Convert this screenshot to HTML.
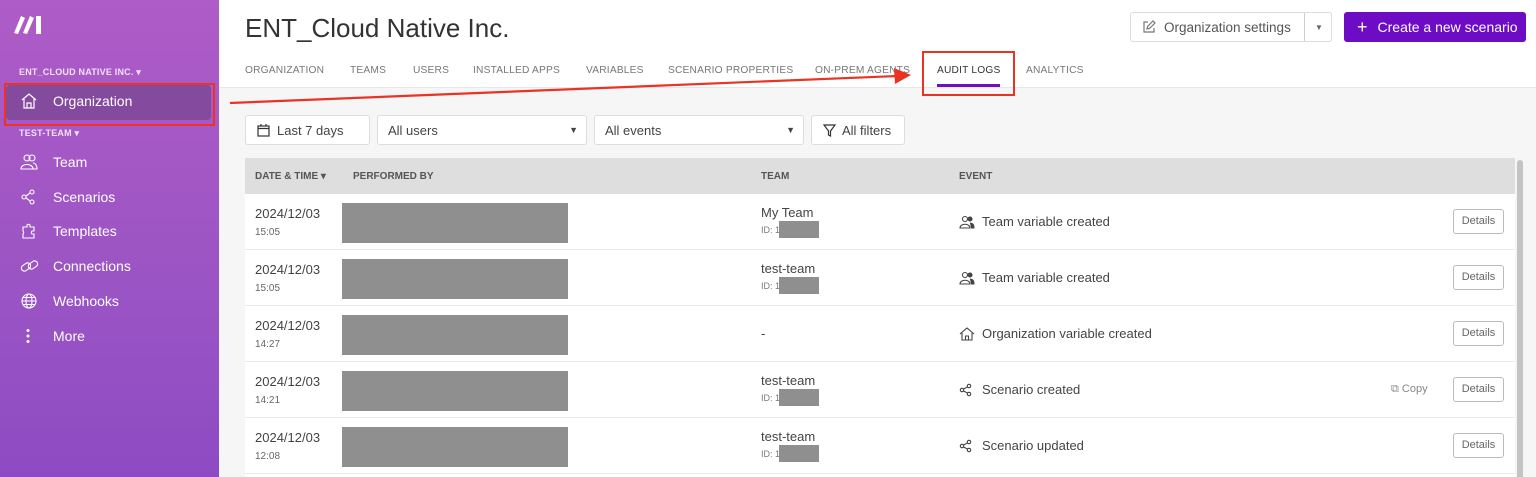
<!DOCTYPE html>
<html style="overflow:hidden;height:477px"><head><meta charset="utf-8"><style>
*{box-sizing:border-box;margin:0;padding:0}
body{width:1536px;height:477px;overflow:hidden;font-family:"Liberation Sans",sans-serif;background:#f6f6f6;position:relative;color:#333}
.sb{position:absolute;left:0;top:0;width:219px;height:477px;background:linear-gradient(180deg,#ae5cc7 0%,#9b54c4 60%,#8d4bc3 100%);color:#fff}
.sec{position:absolute;left:19px;font-size:9px;font-weight:bold;color:#f0e2f6;letter-spacing:.2px}
.it{position:absolute;left:0;width:219px;height:34px;font-size:14px;display:flex;align-items:center}
.it svg{position:absolute;left:20px}
.it span{position:absolute;left:53px}
.hdr{position:absolute;left:219px;top:0;right:0;height:88px;background:#fff;border-bottom:1px solid #e6e6e6}
.title{position:absolute;left:245px;top:13px;font-size:26px;color:#333}
.tabs{position:absolute;top:65px;font-size:10.2px;color:#777;letter-spacing:.2px}
.btn{position:absolute;background:#fff;border:1px solid #ddd;border-radius:3px;height:30px;font-size:13px;color:#444;display:flex;align-items:center}
.tbl{position:absolute;left:245px;top:158px;width:1270px;height:319px;background:#fff;overflow:hidden}
.th{position:absolute;top:0;left:0;right:0;height:36px;background:#dedede;font-size:10px;font-weight:bold;color:#555}
.th span{position:absolute;top:13px}
.row{position:absolute;left:0;right:0;height:56px;border-bottom:1px solid #e8e8e8;font-size:13px;color:#444}
.row .d{position:absolute;left:10px;top:12px}
.row .t{position:absolute;left:10px;top:33px;font-size:10px;color:#666}
.row .g{position:absolute;left:97px;top:9px;width:226px;height:40px;background:#8f8f8f}
.row .tm{position:absolute;left:516px;top:11px}
.row .id{position:absolute;left:516px;top:31px;font-size:9px;color:#777}
.row .idb{position:absolute;left:534px;top:27px;width:40px;height:17px;background:#8f8f8f}
.row .ev{position:absolute;left:737px;top:20px}
.row .ei{position:absolute;left:714px;top:21px}
.det{position:absolute;right:11px;top:15px;width:51px;height:25px;border:1px solid #bbb;border-radius:3px;font-size:11px;color:#666;text-align:center;line-height:23px}
</style></head><body>
<div class="sb">
<svg style="position:absolute;left:13px;top:13px" width="30" height="22" viewBox="0 0 30 22"><path d="M1 20 L8 3 L12 5 L5 21Z M10 20 L17 3 L21 5 L14 21Z" fill="#fff"/><rect x="23" y="3" width="5" height="18" fill="#fff"/></svg>
<div class="sec" style="top:67px">ENT_CLOUD NATIVE INC. ▾</div>
<div style="position:absolute;left:6px;top:85px;width:205px;height:35px;background:#844a9d;border-radius:4px"></div>
<div class="it" style="top:84px"><svg width="18" height="18" viewBox="0 0 18 18" fill="none" stroke="#fff" stroke-width="1.2"><path d="M2 8 L9 2 L16 8 M4 7 V16 H14 V7 M7 16 V11 H11 V16"/></svg><span>Organization</span></div>
<div class="sec" style="top:128px">TEST-TEAM ▾</div>
<div class="it" style="top:145px"><svg width="18" height="18" viewBox="0 0 18 18" fill="none" stroke="#fff" stroke-width="1.1"><circle cx="7" cy="5" r="3"/><circle cx="12" cy="5" r="3"/><path d="M1 16 C1 10 13 10 13 16Z M13 10 C17 10 17 16 17 16 H13"/></svg><span>Team</span></div>
<div class="it" style="top:180px"><svg width="18" height="18" viewBox="0 0 18 18" fill="none" stroke="#fff" stroke-width="1.1"><circle cx="4" cy="9" r="2"/><circle cx="12" cy="4" r="2"/><circle cx="12" cy="14" r="2"/><path d="M6 8 L10 5 M6 10 L10 13"/></svg><span>Scenarios</span></div>
<div class="it" style="top:214px"><svg width="18" height="18" viewBox="0 0 18 18" fill="none" stroke="#fff" stroke-width="1.1"><path d="M3 5 H7 V3 A2 2 0 0 1 10 3 V5 H14 V9 H12 A2 2 0 0 0 12 12 H14 V16 H3 V12 A2 2 0 0 0 3 9Z"/></svg><span>Templates</span></div>
<div class="it" style="top:249px"><svg width="20" height="18" viewBox="0 0 20 18" fill="none" stroke="#fff" stroke-width="1.1"><rect x="1" y="7" width="10" height="6" rx="3" transform="rotate(-35 6 10)"/><rect x="8" y="5" width="10" height="6" rx="3" transform="rotate(-35 13 8)"/></svg><span>Connections</span></div>
<div class="it" style="top:284px"><svg width="18" height="18" viewBox="0 0 18 18" fill="none" stroke="#fff" stroke-width="1.1"><circle cx="9" cy="9" r="7"/><ellipse cx="9" cy="9" rx="3" ry="7"/><path d="M2 9 H16 M3 5.5 H15 M3 12.5 H15"/></svg><span>Webhooks</span></div>
<div class="it" style="top:319px"><svg width="18" height="18" viewBox="0 0 18 18" fill="#fff"><circle cx="8" cy="3.5" r="1.5"/><circle cx="8" cy="9" r="1.5"/><circle cx="8" cy="14.5" r="1.5"/></svg><span>More</span></div>
</div>
<div class="hdr"></div>
<div class="title">ENT_Cloud Native Inc.</div>
<div class="tabs" style="left:245px">ORGANIZATION</div>
<div class="tabs" style="left:350px">TEAMS</div>
<div class="tabs" style="left:413px">USERS</div>
<div class="tabs" style="left:473px">INSTALLED APPS</div>
<div class="tabs" style="left:586px">VARIABLES</div>
<div class="tabs" style="left:668px">SCENARIO PROPERTIES</div>
<div class="tabs" style="left:815px">ON-PREM AGENTS</div>
<div class="tabs" style="left:937px;color:#333">AUDIT LOGS</div>
<div style="position:absolute;left:937px;top:84px;width:63px;height:3px;background:#6d0fc2"></div>
<div class="tabs" style="left:1026px">ANALYTICS</div>
<div class="btn" style="left:1130px;top:12px;width:202px"><svg style="margin-left:11px" width="14" height="14" viewBox="0 0 14 14" fill="none" stroke="#777" stroke-width="1.2"><path d="M6 2 H2 V12 H12 V8 M5 9 L5.5 6.5 L11 1 L13 3 L7.5 8.5Z"/></svg><span style="margin-left:8px;color:#555;font-size:13.5px">Organization settings</span><div style="position:absolute;left:173px;top:0;width:1px;height:28px;background:#ccc"></div><span style="position:absolute;left:184px;font-size:8px;color:#666">▼</span></div>
<div class="btn" style="left:1344px;top:12px;width:182px;background:#6e0bc4;border-color:#6e0bc4;color:#fff;font-size:14px"><span style="margin-left:12px;font-size:18px">+</span><span style="margin-left:10px">Create a new scenario</span></div>
<div class="btn" style="left:245px;top:115px;width:125px"><svg style="margin-left:11px" width="13" height="14" viewBox="0 0 13 14" fill="none" stroke="#333" stroke-width="1.2"><rect x="1" y="3" width="11" height="10"/><path d="M1 5.5 H12 M4 1 V3 M9 1 V3"/></svg><span style="margin-left:7px">Last 7 days</span></div>
<div class="btn" style="left:377px;top:115px;width:210px"><span style="margin-left:10px">All users</span><span style="position:absolute;right:8px;font-size:9px">▼</span></div>
<div class="btn" style="left:594px;top:115px;width:210px"><span style="margin-left:10px">All events</span><span style="position:absolute;right:8px;font-size:9px">▼</span></div>
<div class="btn" style="left:811px;top:115px;width:94px"><svg style="margin-left:11px" width="13" height="13" viewBox="0 0 13 13" fill="none" stroke="#333" stroke-width="1.2"><path d="M1 1 H12 L7.5 7 V12 L5.5 11 V7Z"/></svg><span style="margin-left:6px">All filters</span></div>
<div class="tbl">
<div class="th"><span style="left:10px">DATE &amp; TIME ▾</span><span style="left:108px">PERFORMED BY</span><span style="left:516px">TEAM</span><span style="left:714px">EVENT</span></div>
<div class="row" style="top:36px"><div class="d">2024/12/03</div><div class="t">15:05</div><div class="g"></div><div class="tm">My Team</div><div class="id">ID: 1</div><div class="idb"></div><svg class="ei" width="16" height="14" viewBox="0 0 16 14" fill="none" stroke="#444" stroke-width="1.1"><circle cx="6" cy="4" r="2.5"/><path d="M1 13 C1 8 11 8 11 13Z"/><circle cx="11" cy="4" r="2" fill="#444"/><path d="M11 8 C14 8 15 10 15 13 H12" fill="#444"/></svg><div class="ev">Team variable created</div><div class="det">Details</div></div>
<div class="row" style="top:92px"><div class="d">2024/12/03</div><div class="t">15:05</div><div class="g"></div><div class="tm">test-team</div><div class="id">ID: 1</div><div class="idb"></div><svg class="ei" width="16" height="14" viewBox="0 0 16 14" fill="none" stroke="#444" stroke-width="1.1"><circle cx="6" cy="4" r="2.5"/><path d="M1 13 C1 8 11 8 11 13Z"/><circle cx="11" cy="4" r="2" fill="#444"/><path d="M11 8 C14 8 15 10 15 13 H12" fill="#444"/></svg><div class="ev">Team variable created</div><div class="det">Details</div></div>
<div class="row" style="top:148px"><div class="d">2024/12/03</div><div class="t">14:27</div><div class="g"></div><div class="tm" style="top:20px">-</div><svg class="ei" width="16" height="14" viewBox="0 0 16 14" fill="none" stroke="#444" stroke-width="1.1"><path d="M1 7 L8 1 L15 7 M3 6 V13 H13 V6 M6.5 13 V9 H9.5 V13"/></svg><div class="ev">Organization variable created</div><div class="det">Details</div></div>
<div class="row" style="top:204px"><div class="d">2024/12/03</div><div class="t">14:21</div><div class="g"></div><div class="tm">test-team</div><div class="id">ID: 1</div><div class="idb"></div><svg class="ei" width="16" height="14" viewBox="0 0 16 14" fill="none" stroke="#444" stroke-width="1.1"><circle cx="3" cy="7" r="1.7"/><circle cx="10" cy="3" r="1.7"/><circle cx="10" cy="11" r="1.7"/><path d="M4.5 6 L8.5 4 M4.5 8 L8.5 10"/></svg><div class="ev">Scenario created</div><div style="position:absolute;left:1146px;top:21px;font-size:11px;color:#888">⧉ Copy</div><div class="det">Details</div></div>
<div class="row" style="top:260px"><div class="d">2024/12/03</div><div class="t">12:08</div><div class="g"></div><div class="tm">test-team</div><div class="id">ID: 1</div><div class="idb"></div><svg class="ei" width="16" height="14" viewBox="0 0 16 14" fill="none" stroke="#444" stroke-width="1.1"><circle cx="3" cy="7" r="1.7"/><circle cx="10" cy="3" r="1.7"/><circle cx="10" cy="11" r="1.7"/><path d="M4.5 6 L8.5 4 M4.5 8 L8.5 10"/></svg><div class="ev">Scenario updated</div><div class="det">Details</div></div>
</div>
<div style="position:absolute;left:1517px;top:160px;width:6px;height:317px;background:#c4c4c4;border-radius:3px 3px 0 0"></div>
<div style="position:absolute;left:4px;top:83px;width:211px;height:43px;border:2px solid #ea3323"></div>
<div style="position:absolute;left:922px;top:51px;width:93px;height:45px;border:2px solid #ea3323"></div>
<svg style="position:absolute;left:0;top:0" width="1536" height="477"><line x1="230" y1="103" x2="898" y2="76" stroke="#ea3323" stroke-width="2.2"/><path d="M911 75 L894 68 L895 84Z" fill="#ea3323"/></svg>
</body></html>
